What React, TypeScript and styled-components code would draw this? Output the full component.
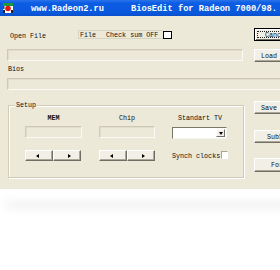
import React from "react";
import styled, { createGlobalStyle } from "styled-components";

const Global = createGlobalStyle`
  html, body { margin: 0; padding: 0; background: #ffffff; }
  body { width: 280px; height: 270px; overflow: hidden; }
  * { box-sizing: border-box; }
`;

const Screen = styled.div`
  width: 280px;
  height: 270px;
  overflow: hidden;
  background: #ffffff;
`;

const Window = styled.div`
  width: 320px;
  display: flex;
  flex-direction: column;
`;

const TitleBar = styled.div`
  height: 16px;
  background: linear-gradient(#2a73ea 0%, #0c5de4 20%, #0a58dc 80%, #0a4fcc 100%);
  display: flex;
  align-items: center;
  padding-left: 3px;
  font-family: "Liberation Mono", "DejaVu Sans Mono", monospace;
  font-weight: bold;
  font-size: 8.7px;
  color: #ffffff;
  white-space: nowrap;
`;

const TitleText = styled.span<{ $ml: number }>`
  margin-left: ${(p) => p.$ml}px;
  line-height: 16px;
  padding-top: 1px;
`;

const Body = styled.div`
  height: 173px;
  background: #ece9d8;
  padding: 12px 0 0 7px;
  display: flex;
  flex-direction: column;
  font-family: "Liberation Mono", "DejaVu Sans Mono", monospace;
  font-size: 6.7px;
  color: #111;
`;

const Row = styled.div<{ $mt?: number }>`
  display: flex;
  align-items: flex-start;
  margin-top: ${(p) => p.$mt ?? 0}px;
`;

const LeftArea = styled.div`
  width: 247px;
  flex-shrink: 0;
  display: flex;
  align-items: flex-start;
`;

const Label = styled.div<{ $w?: number; $mt?: number; $ml?: number }>`
  width: ${(p) => (p.$w ? `${p.$w}px` : "auto")};
  margin-top: ${(p) => p.$mt ?? 0}px;
  margin-left: ${(p) => p.$ml ?? 0}px;
  line-height: 9px;
  white-space: nowrap;
`;

const CheckPanel = styled.div`
  margin-left: 31px;
  margin-top: 2px;
  width: 85px;
  height: 9px;
  display: flex;
  align-items: center;
  border: 1px solid #d8d4c2;
  border-right: none;
  padding-left: 1px;
  white-space: nowrap;
`;

const Gap = styled.span<{ $w: number }>`
  display: inline-block;
  width: ${(p) => p.$w}px;
`;

const BlackCheck = styled.div`
  width: 9px;
  height: 8px;
  margin-top: 3px;
  border: 1.5px solid #000;
  background: #fff;
`;

const Button = styled.div<{ $default?: boolean; $h?: number; $mt?: number }>`
  width: 60px;
  height: ${(p) => p.$h ?? 13}px;
  margin-top: ${(p) => p.$mt ?? 0}px;
  background: #f2f0e6;
  border: 1px solid;
  border-color: ${(p) =>
    p.$default ? "#000" : "#ffffff #716f64 #716f64 #ffffff"};
  box-shadow: ${(p) =>
    p.$default
      ? "inset 1px 1px 0 #fff, inset -1px -1px 0 #716f64"
      : "inset -1px -1px 0 #aca899"};
  color: #111;
  position: relative;
`;

const Focus = styled.div`
  position: absolute;
  inset: 2px;
  border: 1px dotted #222;
`;

const ButtonText = styled.span<{ $pl: number }>`
  position: absolute;
  left: ${(p) => p.$pl}px;
  top: 50%;
  transform: translateY(-50%);
  line-height: 9px;
  white-space: nowrap;
`;

const Field = styled.div<{ $w?: number; $h?: number; $mt?: number }>`
  width: ${(p) => (p.$w ? `${p.$w}px` : "100%")};
  height: ${(p) => p.$h ?? 12}px;
  margin-top: ${(p) => p.$mt ?? 0}px;
  border: 1px solid;
  border-color: #cdc9b6 #fbfaf5 #fbfaf5 #cdc9b6;
  box-shadow: inset 1px 1px 0 #e0ddcd;
  background: #ece9d8;
  flex-shrink: 0;
`;

const RightCol = styled.div`
  display: flex;
  flex-direction: column;
`;

const Group = styled.div`
  margin-top: 5px;
  margin-left: 1px;
  width: 236px;
  height: 73px;
  border: 1px solid #d0ccb8;
  box-shadow: inset 1px 1px 0 #fff, 1px 1px 0 #fff;
  position: relative;
  display: grid;
  grid-template-columns: 57px 56px 56px;
  column-gap: 17px;
  padding: 8px 0 0 16px;
`;

const Legend = styled.div`
  position: absolute;
  left: 6px;
  top: -5px;
  padding: 0 1px;
  background: #ece9d8;
  line-height: 9px;
`;

const Col = styled.div`
  display: flex;
  flex-direction: column;
`;

const ColTitle = styled.div<{ $bold?: boolean }>`
  text-align: center;
  line-height: 9px;
  font-weight: ${(p) => (p.$bold ? "bold" : "normal")};
  white-space: nowrap;
`;

const ArrowRow = styled.div`
  display: flex;
  margin-top: 12px;
`;

const ArrowBtn = styled.div`
  width: 28px;
  height: 11px;
  background: #f2f0e6;
  border: 1px solid;
  border-color: #ffffff #716f64 #716f64 #ffffff;
  box-shadow: inset -1px -1px 0 #aca899;
  display: flex;
  align-items: center;
  justify-content: center;
`;

const Tri = styled.div<{ $dir: "l" | "r" }>`
  width: 0;
  height: 0;
  border-top: 2.5px solid transparent;
  border-bottom: 2.5px solid transparent;
  ${(p) =>
    p.$dir === "l"
      ? "border-right: 3px solid #000; margin-right: 4px;"
      : "border-left: 3px solid #000; margin-left: 4px;"}
`;

const Combo = styled.div`
  margin-top: 4px;
  width: 55px;
  height: 12px;
  background: #fff;
  border: 1px solid;
  border-color: #7a7866 #f5f4ee #f5f4ee #7a7866;
  display: flex;
  justify-content: flex-end;
  padding: 1px;
`;

const ComboBtn = styled.div`
  width: 9px;
  height: 8px;
  background: #f2f0e6;
  border: 1px solid;
  border-color: #ffffff #716f64 #716f64 #ffffff;
  display: flex;
  align-items: center;
  justify-content: center;
`;

const DownTri = styled.div`
  width: 0;
  height: 0;
  border-left: 2.5px solid transparent;
  border-right: 2.5px solid transparent;
  border-top: 3px solid #000;
`;

const SynchRow = styled.div`
  display: flex;
  align-items: center;
  margin-top: 13px;
  white-space: nowrap;
`;

const WhiteCheck = styled.div`
  width: 8px;
  height: 8px;
  background: #fff;
  border: 1px solid;
  border-color: #a8a594 #fff #fff #a8a594;
  margin-left: 1px;
  margin-top: -2px;
`;

const Reflection = styled.div`
  margin-top: 12px;
  margin-left: 6px;
  width: 300px;
  height: 8px;
  background: rgba(150, 150, 140, 0.12);
  filter: blur(4px);
`;

const Icon = () => (
  <svg width="10" height="10" viewBox="0 0 10 10">
    <rect x="0" y="0" width="10" height="10" fill="#ffffff" />
    <rect x="0" y="0" width="10" height="3" fill="#1c9a3a" />
    <circle cx="5" cy="5.5" r="2.8" fill="#e01818" />
    <rect x="0" y="7" width="2" height="3" fill="#202020" />
    <rect x="8" y="7" width="2" height="3" fill="#202020" />
    <rect x="0" y="3" width="1.5" height="3" fill="#444" />
  </svg>
);

export default function App() {
  return (
    <Screen>
      <Global />
      <Window>
        <TitleBar>
          <Icon />
          <TitleText $ml={18}>www.Radeon2.ru</TitleText>
          <TitleText $ml={27}>BiosEdit for Radeon 7000/98.</TitleText>
        </TitleBar>
        <Body>
          <Row>
            <LeftArea>
              <Label $mt={4} $ml={3} $w={37}>Open File</Label>
              <CheckPanel>
                File<Gap $w={10} />Check sum OFF
              </CheckPanel>
              <BlackCheck />
            </LeftArea>
            <RightCol>
              <Button $default>
                <Focus />
                <ButtonText $pl={10}>Cancel</ButtonText>
              </Button>
            </RightCol>
          </Row>
          <Row $mt={8}>
            <LeftArea>
              <Field $w={236} />
            </LeftArea>
            <RightCol>
              <Button>
                <ButtonText $pl={6}>Load</ButtonText>
              </Button>
            </RightCol>
          </Row>
          <Label $mt={3} $ml={1}>Bios</Label>
          <Row $mt={4}>
            <Field $w={320} />
          </Row>
          <Row $mt={10}>
            <LeftArea>
              <Group>
                <Legend>Setup</Legend>
                <Col>
                  <ColTitle $bold>MEM</ColTitle>
                  <Field $w={57} $mt={3} />
                  <ArrowRow>
                    <ArrowBtn><Tri $dir="l" /></ArrowBtn>
                    <ArrowBtn><Tri $dir="r" /></ArrowBtn>
                  </ArrowRow>
                </Col>
                <Col>
                  <ColTitle>Chip</ColTitle>
                  <Field $w={56} $mt={3} />
                  <ArrowRow>
                    <ArrowBtn><Tri $dir="l" /></ArrowBtn>
                    <ArrowBtn><Tri $dir="r" /></ArrowBtn>
                  </ArrowRow>
                </Col>
                <Col>
                  <ColTitle>Standart TV</ColTitle>
                  <Combo>
                    <ComboBtn><DownTri /></ComboBtn>
                  </Combo>
                  <SynchRow>
                    Synch clocks<WhiteCheck />
                  </SynchRow>
                </Col>
              </Group>
            </LeftArea>
            <RightCol>
              <Button $mt={1}>
                <ButtonText $pl={6}>Save</ButtonText>
              </Button>
              <Button $mt={16}>
                <ButtonText $pl={12}>SubS</ButtonText>
              </Button>
              <Button $mt={15} $h={14}>
                <ButtonText $pl={16}>For</ButtonText>
              </Button>
            </RightCol>
          </Row>
        </Body>
        <Reflection />
      </Window>
    </Screen>
  );
}
